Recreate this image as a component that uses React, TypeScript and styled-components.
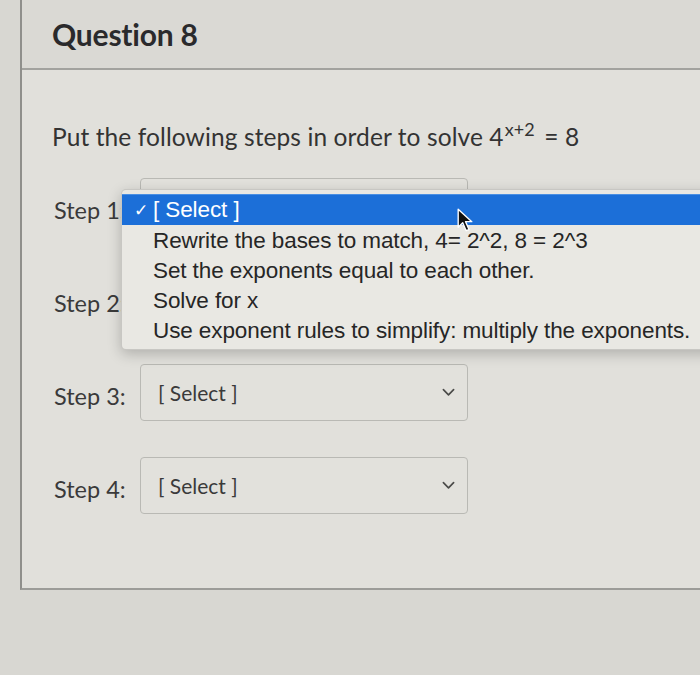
import React from "react";
import styled, { createGlobalStyle } from "styled-components";

const steps = [
  "Rewrite the bases to match, 4= 2^2, 8 = 2^3",
  "Set the exponents equal to each other.",
  "Solve for x",
  "Use exponent rules to simplify: multiply the exponents.",
];

const GlobalStyle = createGlobalStyle`
  body {
    margin: 0;
    background: #d8d7d2;
    font-family: Lato, "Open Sans", sans-serif;
  }
`;

export default function App() {
  return (
    <>
      <GlobalStyle />
      <Page>
        <Card>
          <Header>
            <Title>Question 8</Title>
          </Header>
          <Body>
            <Prompt>
              Put the following steps in order to solve 4<sup>x+2</sup> = 8
            </Prompt>
            <Steps>
              {[1, 2, 3, 4].map((n) => (
                <StepRow key={n}>
                  <StepLabel>Step {n}:</StepLabel>
                  <SelectBox>
                    <SelectText>[ Select ]</SelectText>
                    <Chevron viewBox="0 0 14 9" width="13" height="9">
                      <path
                        d="M1.5 1.5 L7 7 L12.5 1.5"
                        fill="none"
                        stroke="#4a4a48"
                        strokeWidth="1.8"
                        strokeLinecap="round"
                        strokeLinejoin="round"
                      />
                    </Chevron>
                    {n === 1 && (
                      <Menu>
                        <MenuItem $active>
                          <Check>✓</Check>[ Select ]
                        </MenuItem>
                        {steps.map((s) => (
                          <MenuItem key={s}>{s}</MenuItem>
                        ))}
                        <Cursor viewBox="0 0 14 22" width="16" height="25">
                          <path
                            d="M1 1 L1 17 L5 13 L8 20 L10.5 19 L7.5 12 L13 12 Z"
                            fill="#111"
                            stroke="#fff"
                            strokeWidth="1.2"
                            strokeLinejoin="round"
                          />
                        </Cursor>
                      </Menu>
                    )}
                  </SelectBox>
                </StepRow>
              ))}
            </Steps>
          </Body>
        </Card>
      </Page>
    </>
  );
}

const Page = styled.div`
  height: 675px;
  overflow: hidden;
  padding-left: 20px;
`;

const Card = styled.div`
  width: 720px;
  height: 590px;
  box-sizing: border-box;
  background: #e1e0db;
  border-left: 2px solid #8f8f8b;
  border-bottom: 2px solid #9c9c98;
`;

const Header = styled.div`
  height: 70px;
  box-sizing: border-box;
  background: #dad9d4;
  border-bottom: 2px solid #a2a29e;
  display: flex;
  align-items: center;
  padding-left: 30px;
`;

const Title = styled.h2`
  margin: 0;
  font-size: 30px;
  font-weight: 700;
  color: #2a2a2c;
  letter-spacing: -0.2px;
`;

const Body = styled.div`
  padding: 52px 30px 0;
`;

const Prompt = styled.p`
  margin: 0;
  font-size: 24.5px;
  line-height: 30px;
  letter-spacing: 0.1px;
  color: #333333;

  sup {
    font-size: 18px;
    line-height: 0;
    position: relative;
    top: -1px;
    margin: 0 3px 0 1px;
  }
`;

const Steps = styled.div`
  display: flex;
  flex-direction: column;
  gap: 36px;
  margin-top: 26px;
`;

const StepRow = styled.div`
  display: flex;
  align-items: center;
  height: 57px;
`;

const StepLabel = styled.span`
  width: 86px;
  padding-left: 2px;
  padding-top: 6px;
  font-size: 23.5px;
  color: #3a3a3a;
`;

const SelectBox = styled.div`
  position: relative;
  width: 328px;
  height: 57px;
  box-sizing: border-box;
  border: 1.5px solid #b9b9b4;
  border-radius: 4px;
  background: #e2e1dc;
  display: flex;
  align-items: center;
  justify-content: space-between;
  padding: 0 12px 0 17px;
`;

const SelectText = styled.span`
  font-size: 21px;
  color: #3a3a3a;
`;

const Chevron = styled.svg`
  display: block;
`;

const Menu = styled.div`
  position: absolute;
  left: -20px;
  top: 10px;
  width: 620px;
  padding: 4px 0 3px;
  background: #e9e8e3;
  border: 1px solid rgba(0, 0, 0, 0.14);
  border-radius: 5px;
  box-shadow: 0 4px 14px rgba(0, 0, 0, 0.22);
  z-index: 5;
`;

const MenuItem = styled.div<{ $active?: boolean }>`
  position: relative;
  height: 30px;
  display: flex;
  align-items: center;
  padding-left: 31px;
  font-family: "Liberation Sans", Arial, sans-serif;
  font-size: 22.5px;
  letter-spacing: -0.1px;
  white-space: nowrap;
  color: ${(p) => (p.$active ? "#ffffff" : "#262626")};
  background: ${(p) => (p.$active ? "#1c6fd8" : "transparent")};
  border-top: ${(p) => (p.$active ? "1px solid #4a8fe3" : "none")};
  margin-bottom: ${(p) => (p.$active ? "1px" : "0")};
`;

const Check = styled.span`
  position: absolute;
  left: 12px;
  font-size: 17px;
`;

const Cursor = styled.svg`
  position: absolute;
  left: 335px;
  top: 18px;
`;
